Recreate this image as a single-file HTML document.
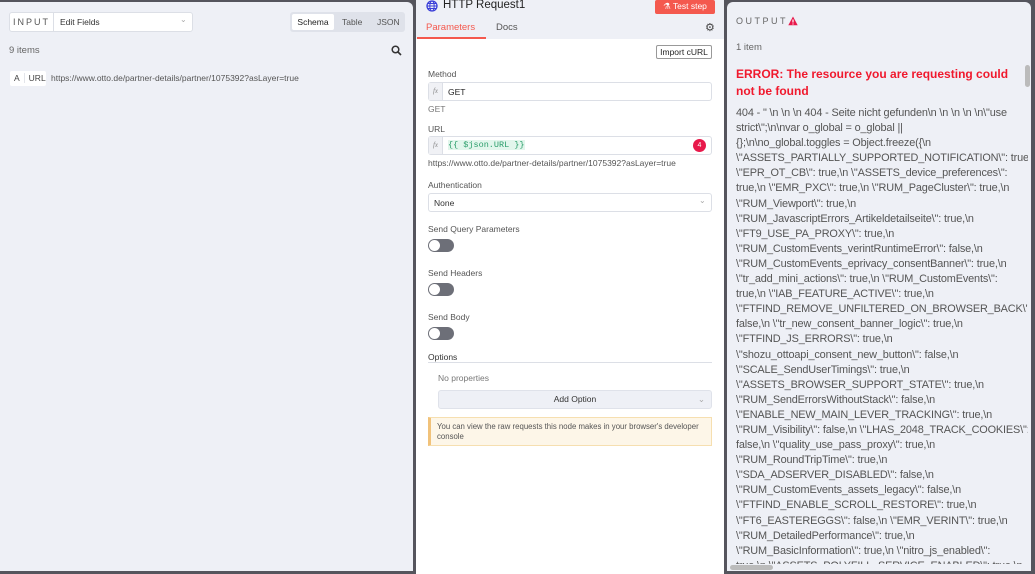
<!DOCTYPE html><html><head><style>
*{box-sizing:border-box;margin:0;padding:0}
body{width:1035px;height:574px;overflow:hidden;background:#55555d;font-family:"Liberation Sans",sans-serif;position:relative;font-size:12px;color:#444}
.p{position:absolute}
#left{left:0;top:2px;width:413px;height:569px;background:#eef0f6;border-radius:0 6px 0 0}
#mid{left:416px;top:0;width:308px;height:574px;background:#fff;overflow:hidden}
#right{left:727px;top:2px;width:304px;height:569px;background:#eef0f6;border-radius:6px 6px 0 0;overflow:hidden}
.lbl{font-size:8.5px;color:#555}
.inp{position:absolute;left:12px;width:284px;height:19px;border:1px solid #dcdfe6;border-radius:3px;background:#fff}
.fx{position:absolute;left:0;top:0;width:14px;height:17px;background:#f0f1f5;border-right:1px solid #dcdfe6;font-style:italic;font-size:7px;color:#888;text-align:center;line-height:17px;font-family:"Liberation Serif",serif}
.tog{position:absolute;left:12px;width:26px;height:13px;border-radius:7px;background:#6d6f78}
.tog:after{content:"";position:absolute;left:1px;top:1px;width:11px;height:11px;border-radius:50%;background:#fff}
#out{position:absolute;left:9px;top:104px;width:292px;font-size:10.9px;line-height:15.1px;color:#555;letter-spacing:-0.15px}
#out div{white-space:nowrap;overflow:hidden}
</style></head><body>
<div id="left" class="p">
 <div class="p" style="left:9px;top:10px;width:184px;height:20px;border:1px solid #dcdfe6;border-radius:3px;background:#fff">
  <div class="p" style="left:0;top:0;width:44px;height:18px;border-right:1px solid #dcdfe6;font-size:9px;letter-spacing:2px;line-height:18px;padding-left:3px;color:#555">INPUT</div>
  <div class="p" style="left:50px;top:0;line-height:18px;font-size:8.5px;color:#333">Edit Fields</div>
  <div class="p" style="left:170px;top:2px;font-size:8px;color:#aaa">⌄</div>
 </div>
 <div class="p" style="left:290px;top:10px;width:115px;height:20px;background:#dfe2ea;border-radius:3px">
  <div class="p" style="left:2px;top:2px;width:42px;height:16px;background:#fff;border-radius:2px;font-size:8.5px;text-align:center;line-height:16px;color:#222">Schema</div>
  <div class="p" style="left:52px;top:2px;font-size:8.5px;line-height:16px;color:#555">Table</div>
  <div class="p" style="left:87px;top:2px;font-size:8.5px;line-height:16px;color:#555">JSON</div>
 </div>
 <div class="p" style="left:9px;top:43px;font-size:9.5px;color:#666">9 items</div>
 <svg class="p" style="left:391px;top:43px" width="11" height="11" viewBox="0 0 11 11"><circle cx="4.5" cy="4.5" r="3.3" stroke="#333" stroke-width="1.5" fill="none"/><path d="M7 7l3 3" stroke="#333" stroke-width="1.6"/></svg>
 <div class="p" style="left:10px;top:69px;width:36px;height:15px;background:#fff;border-radius:2px;font-size:8.5px;line-height:15px"><span style="padding:0 4px;border-right:1px solid #e3e5ea">A</span><span style="padding-left:4px">URL</span></div>
 <div class="p" style="left:51px;top:71px;font-size:8.5px;color:#555">https://www.otto.de/partner-details/partner/1075392?asLayer=true</div>
</div>
<div id="mid" class="p">
 <div class="p" style="left:0;top:0;width:308px;height:39px;background:#eef0f6"></div>
 <svg class="p" style="left:10px;top:0" width="12" height="12" viewBox="0 0 12 12"><circle cx="6" cy="6" r="5" fill="none" stroke="#3b3fd8" stroke-width="1.3"/><ellipse cx="6" cy="6" rx="2.2" ry="5" fill="none" stroke="#3b3fd8" stroke-width="1"/><path d="M1 6h10M2 3.5h8M2 8.5h8" stroke="#3b3fd8" stroke-width="0.9"/></svg>
 <div class="p" style="left:27px;top:-1px;font-size:11.5px;color:#222">HTTP Request1</div>
 <div class="p" style="left:239px;top:0;width:60px;height:14px;background:#f4594e;border-radius:2px;color:#fff;font-size:8.5px;text-align:center;line-height:12px">⚗ Test step</div>
 <div class="p" style="left:10px;top:22px;font-size:9.5px;color:#f4594e">Parameters</div>
 <div class="p" style="left:1px;top:37px;width:69px;height:2px;background:#f4594e"></div>
 <div class="p" style="left:80px;top:22px;font-size:9.5px;color:#555">Docs</div>
 <div class="p" style="left:289px;top:21px;font-size:11px;color:#444">⚙</div>
 <div class="p" style="left:240px;top:45px;width:56px;height:14px;border:1px solid #999;border-radius:2px;font-size:8.5px;text-align:center;line-height:12px;color:#222">Import cURL</div>
 <div class="p lbl" style="left:12px;top:69px">Method</div>
 <div class="inp" style="top:82px"><div class="fx">fx</div><div class="p" style="left:19px;top:4px;font-size:8.5px;color:#222">GET</div></div>
 <div class="p lbl" style="left:12px;top:104px;color:#777">GET</div>
 <div class="p lbl" style="left:12px;top:124px">URL</div>
 <div class="inp" style="top:136px"><div class="fx">fx</div><div class="p" style="left:19px;top:3px;font-size:8.5px;font-family:'Liberation Mono',monospace;color:#2a9d6a;background:#e2f6ec">{{ $json.URL }}</div><div class="p" style="left:264px;top:2px;width:13px;height:13px;border-radius:50%;background:#e8194b;color:#fff;font-size:7px;text-align:center;line-height:13px">4</div></div>
 <div class="p lbl" style="left:12px;top:158px">https://www.otto.de/partner-details/partner/1075392?asLayer=true</div>
 <div class="p lbl" style="left:12px;top:180px">Authentication</div>
 <div class="inp" style="top:193px"><div class="p" style="left:5px;top:4px;font-size:8.5px;color:#333">None</div><div class="p" style="left:270px;top:2px;font-size:8px;color:#aaa">⌄</div></div>
 <div class="p lbl" style="left:12px;top:224px">Send Query Parameters</div><div class="tog" style="top:239px"></div>
 <div class="p lbl" style="left:12px;top:268px">Send Headers</div><div class="tog" style="top:283px"></div>
 <div class="p lbl" style="left:12px;top:312px">Send Body</div><div class="tog" style="top:327px"></div>
 <div class="p lbl" style="left:12px;top:352px;color:#333">Options</div>
 <div class="p" style="left:12px;top:362px;width:284px;height:1px;background:#dcdfe6"></div>
 <div class="p lbl" style="left:22px;top:373px;color:#777">No properties</div>
 <div class="p" style="left:22px;top:390px;width:274px;height:19px;background:#eef0f6;border:1px solid #dfe2ea;border-radius:3px;font-size:8.5px;text-align:center;line-height:17px;color:#333">Add Option<span class="p" style="right:6px;top:0;color:#aaa">⌄</span></div>
 <div class="p" style="left:12px;top:417px;width:284px;height:29px;background:#fdf6e8;border:1px solid #f6dfb0;border-left:3px solid #f1c27a;font-size:7.8px;line-height:10px;padding:4px 6px;color:#555">You can view the raw requests this node makes in your browser's developer console</div>
</div>
<div id="right" class="p">
 <div class="p" style="left:9px;top:14px;font-size:9px;letter-spacing:2.5px;color:#666">OUTPUT</div>
 <svg class="p" style="left:61px;top:14px" width="10" height="10" viewBox="0 0 10 10"><path d="M5 0.5L9.7 9.3H0.3z" fill="#e8194b"/><path d="M5 3.5v3M5 7.5v1" stroke="#fff" stroke-width="1.2"/></svg>
 <div class="p" style="left:9px;top:40px;font-size:9.5px;color:#666">1 item</div>
 <div class="p" style="left:9px;top:64px;width:285px;font-size:12px;line-height:16.5px;font-weight:bold;color:#f0192d">ERROR: The resource you are requesting could not be found</div>
 <div id="out">
<div>404 - " \n \n \n 404 - Seite nicht gefunden\n \n \n \n \n\"use</div>
<div>strict\";\n\nvar o_global = o_global ||</div>
<div>{};\n\no_global.toggles = Object.freeze({\n</div>
<div>\"ASSETS_PARTIALLY_SUPPORTED_NOTIFICATION\": true,\n</div>
<div>\"EPR_OT_CB\": true,\n \"ASSETS_device_preferences\":</div>
<div>true,\n \"EMR_PXC\": true,\n \"RUM_PageCluster\": true,\n</div>
<div>\"RUM_Viewport\": true,\n</div>
<div>\"RUM_JavascriptErrors_Artikeldetailseite\": true,\n</div>
<div>\"FT9_USE_PA_PROXY\": true,\n</div>
<div>\"RUM_CustomEvents_verintRuntimeError\": false,\n</div>
<div>\"RUM_CustomEvents_eprivacy_consentBanner\": true,\n</div>
<div>\"tr_add_mini_actions\": true,\n \"RUM_CustomEvents\":</div>
<div>true,\n \"IAB_FEATURE_ACTIVE\": true,\n</div>
<div>\"FTFIND_REMOVE_UNFILTERED_ON_BROWSER_BACK\":</div>
<div>false,\n \"tr_new_consent_banner_logic\": true,\n</div>
<div>\"FTFIND_JS_ERRORS\": true,\n</div>
<div>\"shozu_ottoapi_consent_new_button\": false,\n</div>
<div>\"SCALE_SendUserTimings\": true,\n</div>
<div>\"ASSETS_BROWSER_SUPPORT_STATE\": true,\n</div>
<div>\"RUM_SendErrorsWithoutStack\": false,\n</div>
<div>\"ENABLE_NEW_MAIN_LEVER_TRACKING\": true,\n</div>
<div>\"RUM_Visibility\": false,\n \"LHAS_2048_TRACK_COOKIES\":</div>
<div>false,\n \"quality_use_pass_proxy\": true,\n</div>
<div>\"RUM_RoundTripTime\": true,\n</div>
<div>\"SDA_ADSERVER_DISABLED\": false,\n</div>
<div>\"RUM_CustomEvents_assets_legacy\": false,\n</div>
<div>\"FTFIND_ENABLE_SCROLL_RESTORE\": true,\n</div>
<div>\"FT6_EASTEREGGS\": false,\n \"EMR_VERINT\": true,\n</div>
<div>\"RUM_DetailedPerformance\": true,\n</div>
<div>\"RUM_BasicInformation\": true,\n \"nitro_js_enabled\":</div>
<div>true,\n \"ASSETS_POLYFILL_SERVICE_ENABLED\": true,\n</div>
 </div>
 <div class="p" style="left:0;top:562px;width:304px;height:7px;background:#eef0f6"></div>
 <div class="p" style="left:3px;top:563px;width:43px;height:5px;border-radius:3px;background:#bbb"></div>
 <div class="p" style="left:298px;top:63px;width:5px;height:22px;border-radius:3px;background:#bbb"></div>
</div>
</body></html>
